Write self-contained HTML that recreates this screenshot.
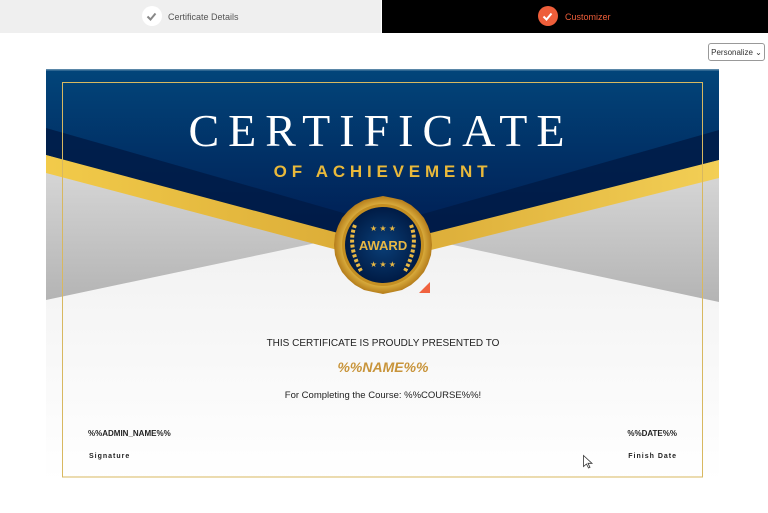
<!DOCTYPE html>
<html><head><meta charset="utf-8"><style>
html,body{margin:0;padding:0;width:768px;height:513px;overflow:hidden;background:#fff;font-family:"Liberation Sans",sans-serif}
.tab{position:absolute;top:0;height:33px}
.btn{position:absolute;left:708px;top:43px;width:57px;height:18px;border:1px solid #999;border-radius:3px;font-size:8px;line-height:18px;text-align:center;color:#333;box-sizing:border-box}
</style></head><body>
<div class="tab" style="left:0;width:381px;background:#efefef"></div>
<div class="tab" style="left:382px;width:386px;background:#000"></div>
<svg width="768" height="513" style="position:absolute;left:0;top:0">
<defs>
<linearGradient id="bl" x1="0" y1="0" x2="0" y2="1"><stop offset="0" stop-color="#02457a"/><stop offset="1" stop-color="#001a50"/></linearGradient>
<linearGradient id="gd" x1="0" y1="0" x2="1" y2="0"><stop offset="0" stop-color="#f2cb4a"/><stop offset="0.5" stop-color="#d9a935"/><stop offset="1" stop-color="#f3cf55"/></linearGradient>
<linearGradient id="gr" x1="0" y1="0" x2="0" y2="1"><stop offset="0" stop-color="#d6d6d6"/><stop offset="1" stop-color="#b4b4b4"/></linearGradient>
<linearGradient id="wh" x1="0" y1="0" x2="0" y2="1"><stop offset="0" stop-color="#e8e8e8"/><stop offset="1" stop-color="#ffffff"/></linearGradient>
<radialGradient id="sg"><stop offset="0.7" stop-color="#f6d25a"/><stop offset="1" stop-color="#b47c1a"/></radialGradient>
<radialGradient id="sn"><stop offset="0" stop-color="#0a3f78"/><stop offset="1" stop-color="#001b45"/></radialGradient>
</defs>
<circle cx="152" cy="16" r="10" fill="#fff"/>
<path d="M147.5 16.5l3 3 5-6" stroke="#888" stroke-width="2" fill="none"/>
<text x="168" y="20" font-size="9" fill="#555" font-family="Liberation Sans">Certificate Details</text>
<circle cx="548" cy="16" r="10" fill="#ee5e3a"/>
<path d="M543.5 16.5l3 3 5-6" stroke="#fff" stroke-width="2" fill="none"/>
<text x="565" y="20" font-size="9" fill="#ee5e3a" font-family="Liberation Sans">Customizer</text>
<rect x="46" y="69" width="673" height="412" fill="url(#wh)"/>
<polygon points="46,170 330,240 46,300" fill="url(#gr)"/>
<polygon points="719,175 430,240 719,302" fill="url(#gr)"/>
<polygon points="46,69 719,69 719,160 383,250 46,155" fill="url(#bl)"/>
<polygon points="46,128 340,212 383,225 430,212 719,130 719,160 383,250 46,155" fill="#001a45" opacity="0.8"/>
<polygon points="46,155 383,245 719,160 719,178 383,262 46,173" fill="url(#gd)"/>
<rect x="46" y="69" width="673" height="1.5" fill="#5a87a8"/>
<rect x="62.5" y="82.5" width="640" height="394.5" fill="none" stroke="#d8b860" stroke-width="1"/>
<text x="381" y="146" text-anchor="middle" font-family="Liberation Serif" font-size="46" fill="#fff" letter-spacing="9">CERTIFICATE</text>
<text x="383" y="177" text-anchor="middle" font-family="Liberation Sans" font-weight="bold" font-size="17" fill="#e9b93b" letter-spacing="4.8">OF ACHIEVEMENT</text>
<g transform="translate(383,245)">
<polygon points="0,-49 10,-47 19,-45 28,-40 35,-34 41,-27 45,-19 48,-10 49,0 48,10 45,19 41,27 35,34 28,40 19,45 10,47 0,49 -10,47 -19,45 -28,40 -35,34 -41,27 -45,19 -48,10 -49,0 -48,-10 -45,-19 -41,-27 -35,-34 -28,-40 -19,-45 -10,-47" fill="url(#sg)"/>
<circle r="41" fill="#c48f22"/>
<circle r="38" fill="url(#sn)"/>
<text y="5" text-anchor="middle" font-family="Liberation Sans" font-weight="bold" font-size="13" fill="#e7b744">AWARD</text>
<text y="-14" text-anchor="middle" font-size="8" fill="#e7b744">★ ★ ★</text>
<text y="22" text-anchor="middle" font-size="8" fill="#e7b744">★ ★ ★</text>
<path d="M-28,-20 Q-36,0 -22,26" stroke="#e7b744" stroke-width="4" fill="none" stroke-dasharray="3 2"/>
<path d="M28,-20 Q36,0 22,26" stroke="#e7b744" stroke-width="4" fill="none" stroke-dasharray="3 2"/>
</g>
<polygon points="430,282 430,293 419,293" fill="#f0623f"/>
<text x="383" y="346" text-anchor="middle" font-size="10" fill="#222">THIS CERTIFICATE IS PROUDLY PRESENTED TO</text>
<text x="383" y="372" text-anchor="middle" font-size="14" font-weight="bold" font-style="italic" fill="#c8943a">%%NAME%%</text>
<text x="383" y="398" text-anchor="middle" font-size="9.5" fill="#222">For Completing the Course: %%COURSE%%!</text>
<text x="88" y="436" font-size="8" font-weight="bold" fill="#222">%%ADMIN_NAME%%</text>
<text x="89" y="458" font-size="7" font-weight="bold" fill="#222" letter-spacing="1">Signature</text>
<text x="677" y="436" text-anchor="end" font-size="8" font-weight="bold" fill="#222">%%DATE%%</text>
<text x="677" y="458" text-anchor="end" font-size="7" font-weight="bold" fill="#222" letter-spacing="1">Finish Date</text>
<path d="M583.5 455.5v11l3-2.5 2 4 1.5-0.7-2-4h4z" fill="#fff" stroke="#333" stroke-width="0.8"/>
</svg>
<div class="btn">Personalize ⌄</div>
</body></html>
